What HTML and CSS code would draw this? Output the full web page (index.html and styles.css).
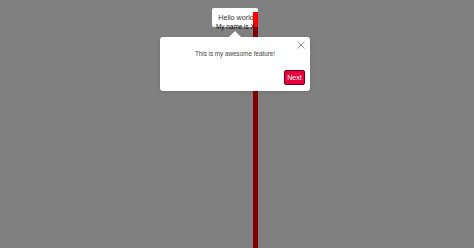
FILE: index.html
```html
<!DOCTYPE html>
<html>
<head>
<meta charset="utf-8">
<link rel="stylesheet" href="styles.css">
</head>
<body>
<div class="stage">
  <div class="bar"></div>
  <div class="spot">
    <div class="hello">Hello world</div>
    <div class="name">My name is X</div>
    <div class="bar-lit"></div>
  </div>
  <div class="popup">
    <div class="arrow"></div>
    <button class="close" aria-label="Close">
      <svg width="8" height="8" viewBox="0 0 8 8"><path d="M0.5 0.5 L7.5 7.5 M7.5 0.5 L0.5 7.5" stroke="#8a8a8a" stroke-width="0.9" fill="none"/></svg>
    </button>
    <p class="text">This is my awesome feature!</p>
    <div class="footer"><button class="next">Next</button></div>
  </div>
</div>
</body>
</html>
```

FILE: styles.css
```css
html, body {
  margin: 0;
  padding: 0;
}
body {
  width: 474px;
  height: 248px;
  background: #808080;
  font-family: "Liberation Sans", Arial, sans-serif;
  overflow: hidden;
}
.stage {
  position: relative;
  width: 474px;
  height: 248px;
}
.bar {
  position: absolute;
  left: 253px;
  top: 12px;
  width: 5px;
  bottom: 0;
  background: #800000;
}
.spot {
  position: absolute;
  left: 212px;
  top: 8px;
  width: 46px;
  height: 19px;
  background: #ffffff;
  border-radius: 2px;
}
.bar-lit {
  position: absolute;
  left: 41px;
  top: 4px;
  width: 5px;
  height: 15px;
  background: #ff0000;
}
.hello {
  position: absolute;
  left: 0;
  top: 5px;
  width: 48px;
  text-align: center;
  font-size: 7.2px;
  color: #333333;
  white-space: nowrap;
}
.name {
  position: absolute;
  left: 4px;
  top: 15px;
  font-size: 6.4px;
  color: #0a0a0a;
  white-space: nowrap;
  z-index: 1;
}
.popup {
  position: absolute;
  left: 160px;
  top: 37px;
  width: 150px;
  height: 54px;
  background: #ffffff;
  border-radius: 3px;
  box-shadow: 0 1px 3px rgba(0,0,0,0.15);
  display: flex;
  flex-direction: column;
}
.arrow {
  position: absolute;
  left: 69px;
  top: -6px;
  width: 0;
  height: 0;
  border-left: 6px solid transparent;
  border-right: 6px solid transparent;
  border-bottom: 6px solid #ffffff;
}
.close {
  position: absolute;
  right: 5px;
  top: 4px;
  padding: 0;
  border: 0;
  background: none;
  width: 8px;
  height: 8px;
  display: flex;
}
.text {
  margin: 13px 0 0;
  text-align: center;
  font-size: 6.3px;
  color: #444444;
}
.footer {
  margin-top: auto;
  display: flex;
  justify-content: flex-end;
  padding: 0 5px 6px;
}
.next {
  width: 21px;
  height: 15px;
  padding: 0;
  background: #e8003d;
  border: 1px solid #6a001c;
  border-radius: 2px;
  color: #ffffff;
  font-family: "Liberation Sans", Arial, sans-serif;
  font-size: 7px;
}
```
